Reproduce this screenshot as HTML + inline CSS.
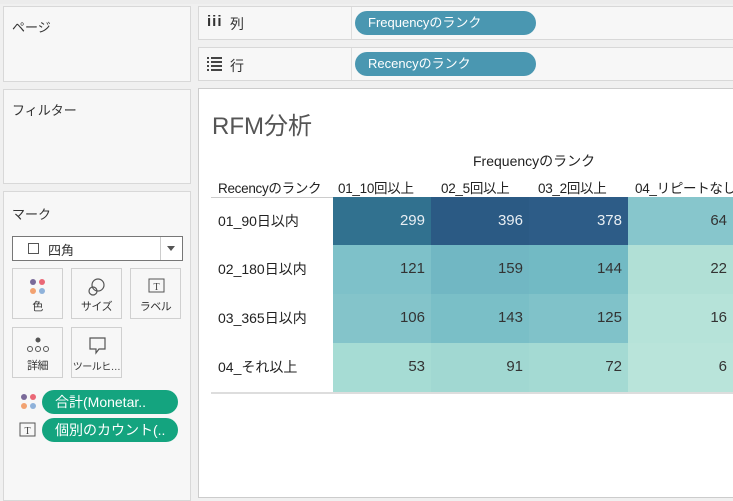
<!DOCTYPE html>
<html><head><meta charset="utf-8"><style>
*{box-sizing:border-box;margin:0;padding:0}
body{width:733px;height:495px;overflow:hidden;background:#f0f0f0;font-family:"Liberation Sans","Noto Sans CJK JP",sans-serif;color:#333;position:relative;font-size:13px}
.a{position:absolute;white-space:nowrap}
.pnl{position:absolute;background:#f7f7f7;border:1px solid #d8d8d8}
.ttl{position:absolute;left:8px;top:10px;font-size:13px;color:#333}
.pill{position:absolute;border-radius:12px;color:#fff;font-size:13px;padding-left:13px;line-height:24px;white-space:nowrap;overflow:hidden}
.btn{position:absolute;width:51px;height:51px;background:#f7f7f7;border:1px solid #d0d0d0;text-align:center;font-size:11px}
.btn .l{position:absolute;bottom:4px;left:0;right:0;white-space:nowrap;letter-spacing:-0.5px}
.cell{position:absolute;text-align:right;padding-right:6px;font-size:15px;line-height:48px}
.rh{position:absolute;left:218px;font-size:14px;color:#222;line-height:48px;white-space:nowrap}
.ch{position:absolute;top:177px;font-size:13.5px;color:#222;white-space:nowrap;letter-spacing:-0.3px}
</style></head><body>
<div class="a" style="left:0;top:0;width:733px;height:4px;background:#ececec"></div>
<div class="pnl" style="left:3px;top:6px;width:188px;height:76px"><div class="ttl">ページ</div></div>
<div class="pnl" style="left:3px;top:89px;width:188px;height:95px"><div class="ttl">フィルター</div></div>
<div class="pnl" style="left:3px;top:191px;width:188px;height:310px"><div class="ttl" style="top:12px">マーク</div></div>
<div class="a" style="left:12px;top:236px;width:171px;height:25px;border:1px solid #777;background:#fff"></div>
<div class="a" style="left:28px;top:243px;width:11px;height:11px;border:1px solid #555"></div>
<div class="a" style="left:48px;top:240px;font-size:13px">四角</div>
<div class="a" style="left:160px;top:237px;width:1px;height:23px;background:#ccc"></div>
<div class="a" style="left:167px;top:246px;width:0;height:0;border-left:4px solid transparent;border-right:4px solid transparent;border-top:5px solid #555"></div>
<div class="btn" style="left:12px;top:268px">
<svg class="a" style="left:16px;top:9px" width="18" height="18"><circle cx="4" cy="4" r="3" fill="#7a6a99"/><circle cx="13" cy="4" r="3" fill="#ea6876"/><circle cx="4" cy="13" r="3" fill="#f2a271"/><circle cx="13" cy="13" r="3" fill="#8fb2da"/></svg><div class="l">色</div></div>
<div class="btn" style="left:71px;top:268px">
<svg class="a" style="left:15px;top:8px" width="20" height="20" fill="none" stroke="#555" stroke-width="1.2"><circle cx="11" cy="8" r="6"/><circle cx="6" cy="14" r="4"/></svg><div class="l">サイズ</div></div>
<div class="btn" style="left:130px;top:268px">
<svg class="a" style="left:17px;top:9px" width="18" height="16"><rect x="1" y="1" width="15" height="13" fill="none" stroke="#555"/><text x="8.5" y="12" font-size="10" text-anchor="middle" fill="#444" font-family="Liberation Serif">T</text></svg><div class="l">ラベル</div></div>
<div class="btn" style="left:12px;top:327px">
<svg class="a" style="left:13px;top:8px" width="24" height="18" fill="none" stroke="#555"><circle cx="12" cy="4" r="2" fill="#555"/><circle cx="4" cy="13" r="2.5"/><circle cx="12" cy="13" r="2.5"/><circle cx="20" cy="13" r="2.5"/></svg><div class="l">詳細</div></div>
<div class="btn" style="left:71px;top:327px">
<svg class="a" style="left:16px;top:8px" width="20" height="20" fill="none" stroke="#555" stroke-width="1.2"><path d="M2 2H17V13H11L8 17V13H2Z"/></svg><div class="l" style="font-size:10px">ツールヒ…</div></div>
<svg class="a" style="left:20px;top:393px" width="18" height="18"><circle cx="4" cy="4" r="3" fill="#7a6a99"/><circle cx="13" cy="4" r="3" fill="#ea6876"/><circle cx="4" cy="13" r="3" fill="#f2a271"/><circle cx="13" cy="13" r="3" fill="#8fb2da"/></svg>
<svg class="a" style="left:19px;top:422px" width="18" height="16"><rect x="1" y="1" width="15" height="13" fill="none" stroke="#555"/><text x="8.5" y="12" font-size="10" text-anchor="middle" fill="#444" font-family="Liberation Serif">T</text></svg>
<div class="pill" style="left:42px;top:390px;width:136px;background:#14a47f;font-size:14px">合計(Monetar..</div>
<div class="pill" style="left:42px;top:418px;width:136px;background:#14a47f;font-size:14px">個別のカウント(..</div>

<div class="pnl" style="left:198px;top:6px;width:540px;height:34px"></div>
<div class="a" style="left:351px;top:7px;width:1px;height:32px;background:#ddd"></div>
<div class="a" style="left:207px;top:13px;font-size:15px;font-weight:bold;letter-spacing:1px">iii</div>
<div class="a" style="left:230px;top:14px;font-size:14px">列</div>
<div class="pill" style="left:355px;top:11px;width:181px;background:#4a97b1">Frequencyのランク</div>
<div class="pnl" style="left:198px;top:47px;width:540px;height:34px"></div>
<div class="a" style="left:351px;top:48px;width:1px;height:32px;background:#ddd"></div>
<svg class="a" style="left:207px;top:57px" width="16" height="14" fill="#444"><rect x="0" y="0" width="2" height="2"/><rect x="4" y="0" width="11" height="2"/><rect x="0" y="4" width="2" height="2"/><rect x="4" y="4" width="11" height="2"/><rect x="0" y="8" width="2" height="2"/><rect x="4" y="8" width="11" height="2"/><rect x="0" y="12" width="2" height="2"/><rect x="4" y="12" width="11" height="2"/></svg>
<div class="a" style="left:230px;top:56px;font-size:14px">行</div>
<div class="pill" style="left:355px;top:52px;width:181px;background:#4a97b1">Recencyのランク</div>

<div class="a" style="left:198px;top:88px;width:540px;height:410px;background:#fff;border:1px solid #ccc;border-right:none"></div>
<div class="a" style="left:212px;top:106px;font-size:24px;color:#555">RFM分析</div>
<div class="a" style="left:473px;top:151px;font-size:14px;color:#222">Frequencyのランク</div>
<div class="ch" style="left:218px">Recencyのランク</div>
<div class="ch" style="left:338px">01_10回以上</div>
<div class="ch" style="left:441px">02_5回以上</div>
<div class="ch" style="left:538px">03_2回以上</div>
<div class="ch" style="left:635px">04_リピートなし</div>
<div class="a" style="left:211px;top:197px;width:522px;height:1px;background:#ccc"></div>
<div class="a" style="left:211px;top:392px;width:522px;height:2px;background:#ddd"></div>
<div class="rh" style="top:197px">01_90日以内</div>
<div class="rh" style="top:245px">02_180日以内</div>
<div class="rh" style="top:294px">03_365日以内</div>
<div class="rh" style="top:343px">04_それ以上</div>

<div class="cell" style="left:333px;top:197px;width:98px;height:48px;background:#31718f;color:#e8eef3">299</div>
<div class="cell" style="left:431px;top:197px;width:98px;height:48px;background:#2b5a84;color:#e8eef3">396</div>
<div class="cell" style="left:529px;top:197px;width:99px;height:48px;background:#2d5c87;color:#e8eef3">378</div>
<div class="cell" style="left:628px;top:197px;width:105px;height:48px;background:#87c6cc;color:#333">64</div>
<div class="cell" style="left:333px;top:245px;width:98px;height:49px;background:#7ec1c9;color:#333">121</div>
<div class="cell" style="left:431px;top:245px;width:98px;height:49px;background:#71b7c3;color:#333">159</div>
<div class="cell" style="left:529px;top:245px;width:99px;height:49px;background:#72bac4;color:#333">144</div>
<div class="cell" style="left:628px;top:245px;width:105px;height:49px;background:#b1e0d6;color:#333">22</div>
<div class="cell" style="left:333px;top:294px;width:98px;height:49px;background:#84c4ca;color:#333">106</div>
<div class="cell" style="left:431px;top:294px;width:98px;height:49px;background:#7abfc7;color:#333">143</div>
<div class="cell" style="left:529px;top:294px;width:99px;height:49px;background:#80c2c9;color:#333">125</div>
<div class="cell" style="left:628px;top:294px;width:105px;height:49px;background:#b6e3d9;color:#333">16</div>
<div class="cell" style="left:333px;top:343px;width:98px;height:49px;background:#a6dcd4;color:#333">53</div>
<div class="cell" style="left:431px;top:343px;width:98px;height:49px;background:#a1d8d2;color:#333">91</div>
<div class="cell" style="left:529px;top:343px;width:99px;height:49px;background:#a4dad3;color:#333">72</div>
<div class="cell" style="left:628px;top:343px;width:105px;height:49px;background:#b9e4da;color:#333">6</div>
</body></html>
